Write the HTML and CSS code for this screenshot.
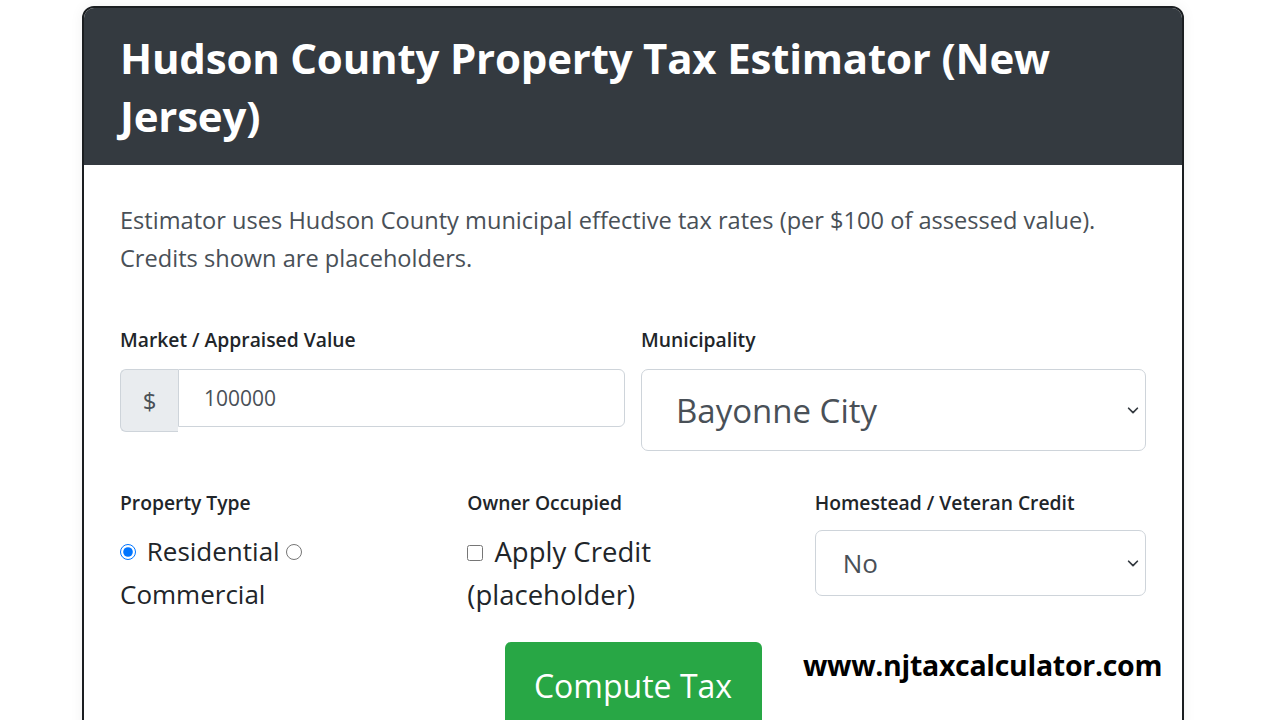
FILE: index.html
```html
<!DOCTYPE html>
<html lang="en">
<head>
  <meta charset="UTF-8" />
  <meta name="viewport" content="width=device-width, initial-scale=1.0"/>
  <title>Hudson County Property Tax Estimator</title>
  <link rel="stylesheet" href="styles.css">
</head>
<body>

  <div class="card">
    <!-- Header -->
    <div class="card-header">
      <h1>Hudson County Property Tax Estimator (New Jersey)</h1>
    </div>

    <div class="card-body">
      <p class="intro">Estimator uses Hudson County municipal effective tax rates (per $100 of assessed value). Credits shown are placeholders.</p>

      <!-- Value + municipality -->
      <div class="row two">
        <div class="field">
          <label for="value">Market / Appraised Value</label>
          <div class="input-group">
            <span class="addon">$</span>
            <input type="text" id="value" value="100000" />
          </div>
        </div>
        <div class="field">
          <label for="town">Municipality</label>
          <div class="select-wrap big">
            <select id="town">
              <option>Bayonne City</option>
              <option>Hoboken City</option>
              <option>Jersey City</option>
            </select>
            <svg class="chev" viewBox="0 0 16 16" width="14" height="14"><path d="M3 6l5 5 5-5" fill="none" stroke="#343a40" stroke-width="2" stroke-linecap="round" stroke-linejoin="round"/></svg>
          </div>
        </div>
      </div>

      <!-- Type / occupied / credit -->
      <div class="row three">
        <div class="field">
          <label>Property Type</label>
          <div class="choice">
            <input type="radio" name="ptype" id="res" checked /> Residential <input type="radio" name="ptype" id="com" /> Commercial
          </div>
        </div>
        <div class="field">
          <label>Owner Occupied</label>
          <div class="choice wide">
            <input type="checkbox" id="owner" /> Apply Credit (placeholder)
          </div>
        </div>
        <div class="field">
          <label for="credit">Homestead / Veteran Credit</label>
          <div class="select-wrap small">
            <select id="credit">
              <option>No</option>
              <option>Yes</option>
            </select>
            <svg class="chev" viewBox="0 0 16 16" width="14" height="14"><path d="M3 6l5 5 5-5" fill="none" stroke="#343a40" stroke-width="2" stroke-linecap="round" stroke-linejoin="round"/></svg>
          </div>
        </div>
      </div>

      <div class="actions">
        <button type="button">Compute Tax</button>
      </div>
    </div>
  </div>

  <div class="watermark">www.njtaxcalculator.com</div>

</body>
</html>
```

FILE: styles.css
```css
* {
  box-sizing: border-box;
}

body {
  font-family: "Open Sans", Arial, sans-serif;
  margin: 0;
  background: #fff;
  color: #212529;
  height: 720px;
  overflow: hidden;
  position: relative;
}

.card {
  width: 1102px;
  margin: 6px 0 0 82px;
  border: 2px solid #1b1e21;
  border-radius: 12px;
  overflow: hidden;
  background: #fff;
  box-shadow: 0 0 14px rgba(0, 0, 0, 0.06);
}

.card-header {
  background-color: #343a40;
  color: #fff;
  padding: 21px 36px 20px;
}

.card-header h1 {
  margin: 0;
  font-size: 42px;
  line-height: 58px;
  font-weight: 700;
  letter-spacing: -0.2px;
}

.card-body {
  padding: 36px 36px 40px;
}

.intro {
  margin: 0 0 49px;
  font-size: 23.6px;
  line-height: 38px;
  color: #495057;
}

.row {
  display: grid;
  gap: 16px;
}

.row.two {
  grid-template-columns: 1fr 1fr;
  margin-bottom: 38px;
}

.row.three {
  grid-template-columns: 1fr 1fr 1fr;
  margin-bottom: 26px;
}

label {
  display: block;
  font-size: 19.3px;
  line-height: 28px;
  font-weight: 600;
  margin-bottom: 15px;
}

.row.three label {
  margin-bottom: 13px;
}

.input-group {
  display: flex;
  align-items: flex-start;
}

.addon {
  width: 58px;
  height: 63px;
  display: flex;
  align-items: center;
  justify-content: center;
  background: #e9ecef;
  border: 1px solid #ced4da;
  border-right: none;
  border-radius: 6px 0 0 6px;
  font-size: 24px;
  color: #495057;
}

.input-group input {
  flex: 1;
  height: 58px;
  border: 1px solid #ced4da;
  border-radius: 0 6px 6px 0;
  padding: 0 25px;
  font-family: inherit;
  font-size: 21px;
  color: #495057;
}

.select-wrap {
  position: relative;
}

.select-wrap select {
  width: 100%;
  appearance: none;
  -webkit-appearance: none;
  background: #fff;
  border: 1px solid #ced4da;
  border-radius: 7px;
  font-family: inherit;
  color: #495057;
}

.select-wrap.big select {
  height: 82px;
  padding: 0 34px;
  font-size: 33px;
}

.select-wrap.small select {
  height: 66px;
  padding: 0 27px;
  font-size: 26px;
}

.chev {
  position: absolute;
  right: 6px;
  top: 50%;
  margin-top: -7px;
}

.choice {
  font-size: 26px;
  line-height: 43px;
  margin-top: 0;
}

.choice.wide {
  font-size: 27.5px;
}

.choice input {
  width: 16px;
  height: 16px;
  margin: 0 4px 0 0;
  vertical-align: 1px;
}

.actions {
  text-align: center;
}

button {
  width: 257px;
  height: 84px;
  padding: 2px 20px 0;
  background-color: #28a745;
  border: none;
  border-radius: 6px;
  color: #fff;
  font-family: inherit;
  font-size: 32px;
  cursor: pointer;
}

.watermark {
  position: absolute;
  left: 803px;
  top: 646px;
  font-size: 28.5px;
  font-weight: 700;
  color: #000;
  letter-spacing: -0.3px;
}
```
